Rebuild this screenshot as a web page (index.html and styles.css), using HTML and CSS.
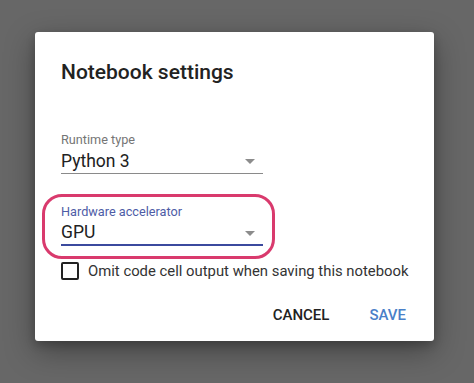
FILE: index.html
```html
<!DOCTYPE html>
<html>
<head>
<meta charset="utf-8">
<link rel="stylesheet" href="styles.css">
</head>
<body>
<div class="dialog">
  <h1 class="title">Notebook settings</h1>
  <div class="field">
    <div class="label">Runtime type</div>
    <div class="select">
      <span class="value">Python 3</span>
      <span class="arrow"></span>
    </div>
  </div>
  <div class="highlight">
    <div class="field focused">
      <div class="label">Hardware accelerator</div>
      <div class="select">
        <span class="value">GPU</span>
        <span class="arrow"></span>
      </div>
    </div>
  </div>
  <label class="check">
    <span class="box"></span>
    <span class="check-text">Omit code cell output when saving this notebook</span>
  </label>
  <div class="actions">
    <span class="btn">CANCEL</span>
    <span class="btn primary">SAVE</span>
  </div>
</div>
</body>
</html>
```
FILE: styles.css
```css
html, body {
  margin: 0;
  padding: 0;
  background: #676767;
  width: 474px;
  height: 383px;
  overflow: hidden;
  font-family: Roboto, "Liberation Sans", sans-serif;
}
body {
  padding-top: 32px;
  box-sizing: border-box;
}
.dialog {
  margin-left: 35px;
  width: 399px;
  height: 309px;
  box-sizing: border-box;
  background: #fff;
  border-radius: 3px;
  box-shadow: 0 10px 30px rgba(0,0,0,0.35), 0 4px 10px rgba(0,0,0,0.2);
  padding: 0 0 0 26px;
  display: flex;
  flex-direction: column;
}
.title {
  margin: 27px 0 0 0;
  font-size: 21px;
  font-weight: 500;
  color: #222;
  line-height: 26px;
}
.field {
  width: 202px;
}
.dialog > .field {
  margin-top: 47px;
}
.label {
  font-size: 12.7px;
  color: #757575;
  line-height: 16px;
}
.select {
  display: flex;
  align-items: center;
  justify-content: space-between;
  height: 25px;
  border-bottom: 1px solid #8a8a8a;
}
.value {
  font-size: 17.5px;
  color: #212121;
  line-height: 24px;
}
.arrow {
  width: 0;
  height: 0;
  border-left: 5px solid transparent;
  border-right: 5px solid transparent;
  border-top: 5px solid #8c8c8c;
  margin-right: 8px;
  margin-top: 2px;
}
.highlight {
  margin-left: -19px;
  margin-top: 20px;
  width: 233px;
  height: 65px;
  box-sizing: border-box;
  border: 3px solid #d93a6d;
  border-radius: 20px;
  padding: 7px 0 0 16px;
}
.focused .label {
  color: #4e5ca6;
}
.focused .select {
  border-bottom: 2px solid #3b4a9e;
  height: 24px;
}
.check {
  display: flex;
  align-items: center;
  margin-top: 2px;
  height: 20px;
}
.box {
  width: 18px;
  height: 18px;
  box-sizing: border-box;
  border: 2px solid #222;
  border-radius: 2px;
  margin-right: 9px;
}
.check-text {
  font-size: 14.85px;
  color: #333;
}
.actions {
  display: flex;
  justify-content: flex-end;
  margin-top: 24px;
  padding-right: 28px;
  gap: 40px;
}
.btn {
  font-size: 15px;
  font-weight: 500;
  color: #222;
  line-height: 20px;
}
.btn.primary {
  color: #4a80c8;
}
```
